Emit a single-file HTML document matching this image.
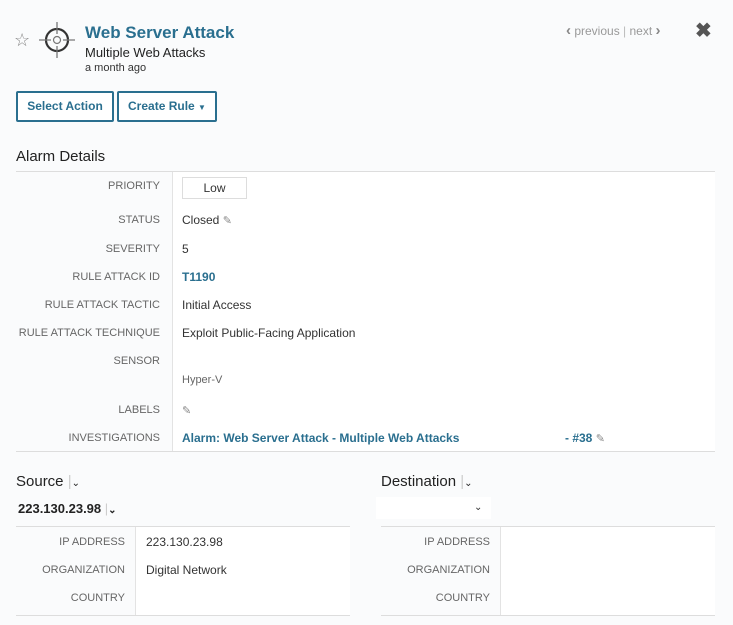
<!DOCTYPE html>
<html><head><meta charset="utf-8"><style>
*{margin:0;padding:0;box-sizing:border-box}
body{width:733px;height:625px;background:#fafbfc;font-family:"Liberation Sans",sans-serif;color:#333;position:relative;overflow:hidden}
.a{position:absolute;white-space:nowrap}
.lbl{font-size:11px;color:#666;text-align:right;width:150px;left:10px}
.v{font-size:12px;color:#333;left:182px}
.lnk{color:#2a6f8f;font-weight:bold}
.btn{position:absolute;top:91px;height:31px;border:2px solid #2a6f8f;background:#fff;color:#2a6f8f;font-weight:bold;font-size:12px;line-height:27px;text-align:center;border-radius:2px}
</style></head><body>
<div class="a" style="left:14px;top:30px;font-size:18px;color:#888">☆</div>
<svg class="a" style="left:38px;top:21px" width="38" height="38" viewBox="0 0 38 38"><circle cx="19" cy="19" r="11" fill="none" stroke="#333" stroke-width="2.2"/><circle cx="19" cy="19" r="3.5" fill="none" stroke="#777" stroke-width="1.2"/><path d="M19 1v12M19 25v12M1 19h12M25 19h12" stroke="#777" stroke-width="1.3"/></svg>
<div class="a" style="left:85px;top:23px;font-size:17px;font-weight:bold;color:#2a6f8f">Web Server Attack</div>
<div class="a" style="left:85px;top:45px;font-size:13px;color:#222">Multiple Web Attacks</div>
<div class="a" style="left:85px;top:62px;font-size:11px;color:#333">a month ago</div>
<div class="a" style="left:566px;top:22px;font-size:12px;color:#999"><b style="color:#888;font-size:15px">‹</b> previous <span style="color:#bbb">|</span> next <b style="color:#888;font-size:15px">›</b></div>
<div class="a" style="left:695px;top:18px;font-size:20px;color:#555;font-weight:bold">✖</div>
<div class="btn" style="left:16px;width:98px">Select Action</div>
<div class="btn" style="left:117px;width:100px">Create Rule <span style="font-size:8px">▼</span></div>
<div class="a" style="left:16px;top:148px;font-size:15px;color:#222">Alarm Details</div>
<div class="a" style="left:16px;top:171px;width:699px;height:281px;border-top:1px solid #ddd;border-bottom:1px solid #ddd"></div>
<div class="a" style="left:172px;top:172px;width:543px;height:279px;background:#fff;border-left:1px solid #e3e3e3"></div>
<div class="a lbl" style="top:180px">PRIORITY</div>
<div class="a" style="left:182px;top:177px;width:65px;height:22px;border:1px solid #ddd;background:#fff;font-size:12px;text-align:center;line-height:20px">Low</div>
<div class="a lbl" style="top:214px">STATUS</div><div class="a v" style="top:213px">Closed <span style="color:#888;font-size:11px">✎</span></div>
<div class="a lbl" style="top:243px">SEVERITY</div><div class="a v" style="top:242px">5</div>
<div class="a lbl" style="top:271px">RULE ATTACK ID</div><div class="a v lnk" style="top:270px">T1190</div>
<div class="a lbl" style="top:299px">RULE ATTACK TACTIC</div><div class="a v" style="top:298px">Initial Access</div>
<div class="a lbl" style="top:327px">RULE ATTACK TECHNIQUE</div><div class="a v" style="top:326px">Exploit Public-Facing Application</div>
<div class="a lbl" style="top:355px">SENSOR</div><div class="a v" style="top:374px;font-size:11px;color:#666">Hyper-V</div>
<div class="a lbl" style="top:404px">LABELS</div><div class="a v" style="top:404px;color:#888;font-size:11px">✎</div>
<div class="a lbl" style="top:432px">INVESTIGATIONS</div><div class="a v lnk" style="top:431px">Alarm: Web Server Attack - Multiple Web Attacks</div>
<div class="a lnk" style="left:565px;top:431px;font-size:12px">- #38 <span style="color:#888;font-weight:normal;font-size:11px">✎</span></div>
<div class="a" style="left:16px;top:473px;font-size:15px;color:#222">Source <span style="color:#ccc">|</span><span style="font-size:10px">⌄</span></div>
<div class="a" style="left:18px;top:501px;font-size:13px;font-weight:bold;color:#222">223.130.23.98 <span style="color:#ccc;font-weight:normal">|</span><span style="font-size:10px">⌄</span></div>
<div class="a" style="left:381px;top:473px;font-size:15px;color:#222">Destination <span style="color:#ccc">|</span><span style="font-size:10px">⌄</span></div>
<div class="a" style="left:376px;top:497px;width:115px;height:22px;background:#fff"></div>
<div class="a" style="left:474px;top:502px;font-size:10px">⌄</div>
<div class="a" style="left:16px;top:526px;width:334px;height:90px;border-top:1px solid #ddd;border-bottom:1px solid #ddd"></div>
<div class="a" style="left:135px;top:527px;width:215px;height:88px;background:#fff;border-left:1px solid #e3e3e3"></div>
<div class="a" style="left:381px;top:526px;width:334px;height:90px;border-top:1px solid #ddd;border-bottom:1px solid #ddd"></div>
<div class="a" style="left:500px;top:527px;width:215px;height:88px;background:#fff;border-left:1px solid #e3e3e3"></div>
<div class="a lbl" style="left:-25px;top:536px">IP ADDRESS</div><div class="a v" style="left:146px;top:535px">223.130.23.98</div>
<div class="a lbl" style="left:-25px;top:564px">ORGANIZATION</div><div class="a v" style="left:146px;top:563px">Digital Network</div>
<div class="a lbl" style="left:-25px;top:592px">COUNTRY</div>
<div class="a lbl" style="left:340px;top:536px">IP ADDRESS</div>
<div class="a lbl" style="left:340px;top:564px">ORGANIZATION</div>
<div class="a lbl" style="left:340px;top:592px">COUNTRY</div>
</body></html>
